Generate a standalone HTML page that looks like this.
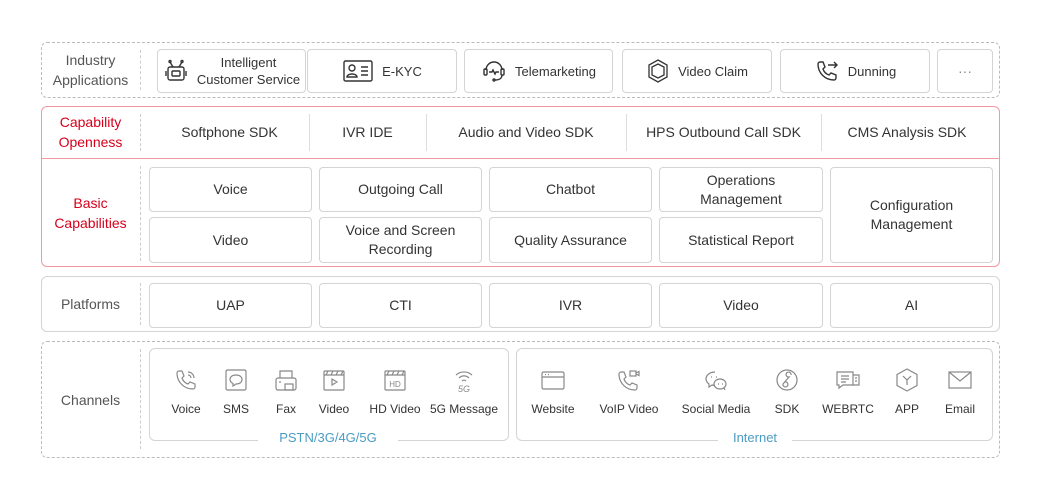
<!DOCTYPE html>
<html><head><meta charset="utf-8"><style>
*{margin:0;padding:0;box-sizing:border-box}
body{width:1040px;height:498px;background:#fff;font-family:"Liberation Sans",sans-serif;color:#333;position:relative;overflow:hidden}
.a{position:absolute}
.box{position:absolute;border:1px solid #d4d4d4;border-radius:4px;display:flex;align-items:center;justify-content:center;text-align:center;font-size:14px;color:#333;line-height:19px}
.lbl{position:absolute;display:flex;align-items:center;justify-content:center;text-align:center;font-size:14px;line-height:20px;color:#555}
.red{color:#d7001b}
.vs{position:absolute;border-left:1px dashed #ccc}
.cs{position:absolute;border-left:1px solid #ddd}
.ch{position:absolute;width:80px;margin-left:-40px;text-align:center;font-size:12px;color:#333;top:402px}
.ic{position:absolute;width:26px;height:26px;margin-left:-13px;top:367px}
svg{display:block}
.ib{display:flex;align-items:center;gap:8px}
</style></head><body>

<!-- Industry -->
<div class="a" style="left:41px;top:42px;width:959px;height:56px;border:1px dashed #bbb;border-radius:6px"></div>
<div class="lbl" style="left:41px;top:42px;width:99px;height:56px">Industry<br>Applications</div>
<div class="vs" style="left:140px;top:50px;height:40px"></div>
<div class="box" style="left:157px;top:49px;width:149px;height:44px;font-size:13px;line-height:17px"><div class="ib">
<svg width="26" height="26" viewBox="0 0 26 26" fill="none" stroke="#333" stroke-width="1.4"><rect x="5" y="9" width="16" height="13" rx="2"/><rect x="9" y="13" width="8" height="5" rx="1"/><path d="M3 13v5M23 13v5M10 9L7 4M16 9l3-5"/><circle cx="7" cy="3.5" r="1"/><circle cx="19" cy="3.5" r="1"/></svg>
<span>Intelligent<br>Customer Service</span></div></div>
<div class="box" style="left:307px;top:49px;width:150px;height:44px;font-size:13px"><div class="ib">
<svg width="32" height="24" viewBox="0 0 32 24" fill="none" stroke="#333" stroke-width="1.4"><rect x="2" y="2" width="28" height="20" rx="1.5"/><circle cx="10" cy="9" r="3"/><path d="M5 18c0-4 10-4 10 0zM19 8h7M19 12h7M19 16h7"/></svg>
<span>E-KYC</span></div></div>
<div class="box" style="left:464px;top:49px;width:149px;height:44px;font-size:13px"><div class="ib">
<svg width="26" height="26" viewBox="0 0 26 26" fill="none" stroke="#333" stroke-width="1.4"><path d="M5 12a8 8 0 0116 0"/><rect x="3" y="11" width="3" height="6" rx="1"/><rect x="20" y="11" width="3" height="6" rx="1"/><path d="M8 14h3l1-2 2 4 1-2h3M21 17c0 4-4 5-7 5"/><circle cx="13" cy="22" r="1"/></svg>
<span>Telemarketing</span></div></div>
<div class="box" style="left:622px;top:49px;width:150px;height:44px;font-size:13px"><div class="ib">
<svg width="24" height="26" viewBox="0 0 24 26" fill="none" stroke="#333" stroke-width="1.3"><path d="M12 2l9 5v12l-9 5-9-5V7z"/><path d="M12 6l6 3v8l-6 3-6-3V9z"/></svg>
<span>Video Claim</span></div></div>
<div class="box" style="left:780px;top:49px;width:150px;height:44px;font-size:13px"><div class="ib">
<svg width="26" height="26" viewBox="0 0 26 26" fill="none" stroke="#333" stroke-width="1.4"><path d="M6 4l3 0 2 5-2 2c1 3 3 5 6 6l2-2 5 2v3c0 1-1 2-2 2C11 22 4 15 4 6c0-1 1-2 2-2z"/><path d="M14 7h9M20 4l3 3-3 3"/></svg>
<span>Dunning</span></div></div>
<div class="box" style="left:937px;top:49px;width:56px;height:44px;color:#888;font-size:14px">···</div>

<!-- Capability + Basic -->
<div class="a" style="left:41px;top:106px;width:959px;height:161px;border:1px solid #ef9aa3;border-radius:6px"></div>
<div class="a" style="left:41px;top:158px;width:959px;border-top:1px solid #ef9aa3"></div>
<div class="lbl red" style="left:41px;top:106px;width:99px;height:52px">Capability<br>Openness</div>
<div class="vs" style="left:140px;top:114px;height:37px"></div>
<div class="lbl" style="left:150px;top:106px;width:159px;height:52px;color:#333">Softphone SDK</div>
<div class="cs" style="left:309px;top:114px;height:37px"></div>
<div class="lbl" style="left:309px;top:106px;width:117px;height:52px;color:#333">IVR IDE</div>
<div class="cs" style="left:426px;top:114px;height:37px"></div>
<div class="lbl" style="left:426px;top:106px;width:200px;height:52px;color:#333">Audio and Video SDK</div>
<div class="cs" style="left:626px;top:114px;height:37px"></div>
<div class="lbl" style="left:626px;top:106px;width:195px;height:52px;color:#333">HPS Outbound Call SDK</div>
<div class="cs" style="left:821px;top:114px;height:37px"></div>
<div class="lbl" style="left:821px;top:106px;width:172px;height:52px;color:#333">CMS Analysis SDK</div>

<div class="lbl red" style="left:41px;top:159px;width:99px;height:108px">Basic<br>Capabilities</div>
<div class="vs" style="left:140px;top:166px;height:95px"></div>
<div class="box" style="left:149px;top:167px;width:163px;height:45px">Voice</div>
<div class="box" style="left:319px;top:167px;width:163px;height:45px">Outgoing Call</div>
<div class="box" style="left:489px;top:167px;width:163px;height:45px">Chatbot</div>
<div class="box" style="left:659px;top:167px;width:164px;height:45px">Operations<br>Management</div>
<div class="box" style="left:149px;top:217px;width:163px;height:46px">Video</div>
<div class="box" style="left:319px;top:217px;width:163px;height:46px">Voice and Screen<br>Recording</div>
<div class="box" style="left:489px;top:217px;width:163px;height:46px">Quality Assurance</div>
<div class="box" style="left:659px;top:217px;width:164px;height:46px">Statistical Report</div>
<div class="box" style="left:830px;top:167px;width:163px;height:96px">Configuration<br>Management</div>

<!-- Platforms -->
<div class="a" style="left:41px;top:276px;width:959px;height:56px;border:1px solid #d4d4d4;border-radius:6px"></div>
<div class="lbl" style="left:41px;top:276px;width:99px;height:56px">Platforms</div>
<div class="vs" style="left:140px;top:283px;height:42px"></div>
<div class="box" style="left:149px;top:283px;width:163px;height:45px">UAP</div>
<div class="box" style="left:319px;top:283px;width:163px;height:45px">CTI</div>
<div class="box" style="left:489px;top:283px;width:163px;height:45px">IVR</div>
<div class="box" style="left:659px;top:283px;width:164px;height:45px">Video</div>
<div class="box" style="left:830px;top:283px;width:163px;height:45px">AI</div>

<!-- Channels -->
<div class="a" style="left:41px;top:341px;width:959px;height:117px;border:1px dashed #bbb;border-radius:6px"></div>
<div class="lbl" style="left:41px;top:341px;width:99px;height:117px">Channels</div>
<div class="vs" style="left:140px;top:349px;height:100px"></div>
<div class="a" style="left:149px;top:348px;width:360px;height:93px;border:1px solid #d4d4d4;border-radius:6px"></div>
<div class="a" style="left:516px;top:348px;width:477px;height:93px;border:1px solid #d4d4d4;border-radius:6px"></div>
<div class="a" style="left:258px;top:430px;width:140px;height:20px;background:#fff;text-align:center;font-size:13px;color:#4a9cc4">PSTN/3G/4G/5G</div>
<div class="a" style="left:718px;top:430px;width:74px;height:20px;background:#fff;text-align:center;font-size:13px;color:#4a9cc4">Internet</div>

<!-- channel icons -->
<div class="ic" style="left:186px"><svg width="26" height="26" viewBox="0 0 26 26" fill="none" stroke="#888" stroke-width="1.2"><path d="M6 4h3l2 5-2 2c1 3 3 5 6 6l2-2 5 2v3c0 1-1 2-2 2C11 22 4 15 4 6c0-1 1-2 2-2z"/><path d="M15 5a6 6 0 016 6M15 8a3 3 0 013 3"/></svg></div>
<div class="ic" style="left:236px"><svg width="26" height="26" viewBox="0 0 26 26" fill="none" stroke="#888" stroke-width="1.2"><rect x="3" y="3" width="20" height="20" rx="1.5"/><path d="M13 8c4 0 6 2 6 4.5S17 17 13 17l-3 2v-2.5C8 15.5 7 14 7 12.5 7 10 9 8 13 8z"/></svg></div>
<div class="ic" style="left:286px"><svg width="26" height="26" viewBox="0 0 26 26" fill="none" stroke="#888" stroke-width="1.2"><path d="M7 11V4h12v7"/><rect x="3" y="11" width="20" height="12" rx="2"/><rect x="12" y="17" width="8" height="6"/><path d="M6 15h2"/></svg></div>
<div class="ic" style="left:334px"><svg width="26" height="26" viewBox="0 0 26 26" fill="none" stroke="#888" stroke-width="1.2"><rect x="3" y="4" width="20" height="19" rx="1"/><path d="M3 8h20M7 4l-2 4M12 4l-2 4M17 4l-2 4M22 4l-2 4M11 12v6l5-3z"/></svg></div>
<div class="ic" style="left:395px"><svg width="26" height="26" viewBox="0 0 26 26" fill="none" stroke="#888" stroke-width="1.2"><rect x="3" y="4" width="20" height="19" rx="1"/><path d="M3 8h20M7 4l-2 4M12 4l-2 4M17 4l-2 4M22 4l-2 4"/><text x="13" y="20" font-size="8" fill="#888" stroke="none" text-anchor="middle" font-family="Liberation Sans">HD</text></svg></div>
<div class="ic" style="left:464px"><svg width="26" height="26" viewBox="0 0 26 26" fill="none" stroke="#888" stroke-width="1.2"><path d="M5 8a12 12 0 0116 0M8 11a7 7 0 0110 0M11 14a3 3 0 014 0"/><text x="13" y="25" font-size="9" fill="#888" stroke="none" text-anchor="middle" font-style="italic" font-family="Liberation Sans">5G</text></svg></div>

<div class="ic" style="left:553px"><svg width="26" height="26" viewBox="0 0 26 26" fill="none" stroke="#888" stroke-width="1.2"><rect x="2" y="5" width="22" height="17" rx="1.5"/><path d="M2 10h22M5 7.5h1M8 7.5h1"/></svg></div>
<div class="ic" style="left:629px"><svg width="26" height="26" viewBox="0 0 26 26" fill="none" stroke="#888" stroke-width="1.2"><path d="M5 5h3l2 5-2 2c1 3 3 5 6 6l2-2 5 2v3c0 1-1 2-2 2C10 23 3 16 3 7c0-1 1-2 2-2z"/><rect x="14" y="4" width="6" height="5"/><path d="M20 6l3-1.5v4L20 7"/></svg></div>
<div class="ic" style="left:716px"><svg width="26" height="26" viewBox="0 0 26 26" fill="none" stroke="#888" stroke-width="1.2"><path d="M12 5C7 5 3 8 3 12c0 2 1 3.5 3 5v3l3-2c1 .3 2 .4 3 .4"/><ellipse cx="17" cy="17" rx="6" ry="5"/><path d="M8 10h1M13 10h1M15 17h1M19 17h1M21 21l1 2"/></svg></div>
<div class="ic" style="left:787px"><svg width="26" height="26" viewBox="0 0 26 26" fill="none" stroke="#888" stroke-width="1.2"><circle cx="13" cy="13" r="10"/><path d="M11 15a2.5 2.5 0 11-2 2l6-7a2.5 2.5 0 112-2"/></svg></div>
<div class="ic" style="left:848px"><svg width="26" height="26" viewBox="0 0 26 26" fill="none" stroke="#888" stroke-width="1.2"><path d="M2 5h16v13H8l-4 3v-3H2z"/><path d="M18 8h6v10h-6M6 9h8M6 12h8M6 15h5M20 11h2M20 14h2"/></svg></div>
<div class="ic" style="left:907px"><svg width="26" height="26" viewBox="0 0 26 26" fill="none" stroke="#888" stroke-width="1.2"><path d="M13 2l10 5.5v11L13 24 3 18.5v-11z"/><path d="M9 9l4 4 4-4M13 13v5"/></svg></div>
<div class="ic" style="left:960px"><svg width="26" height="26" viewBox="0 0 26 26" fill="none" stroke="#888" stroke-width="1.2"><rect x="2" y="5" width="22" height="16"/><path d="M2 5l11 9 11-9"/></svg></div>

<div class="ch" style="left:186px">Voice</div>
<div class="ch" style="left:236px">SMS</div>
<div class="ch" style="left:286px">Fax</div>
<div class="ch" style="left:334px">Video</div>
<div class="ch" style="left:395px">HD Video</div>
<div class="ch" style="left:464px;width:90px;margin-left:-45px">5G Message</div>
<div class="ch" style="left:553px">Website</div>
<div class="ch" style="left:629px">VoIP Video</div>
<div class="ch" style="left:716px;width:90px;margin-left:-45px">Social Media</div>
<div class="ch" style="left:787px">SDK</div>
<div class="ch" style="left:848px">WEBRTC</div>
<div class="ch" style="left:907px">APP</div>
<div class="ch" style="left:960px">Email</div>
</body></html>
